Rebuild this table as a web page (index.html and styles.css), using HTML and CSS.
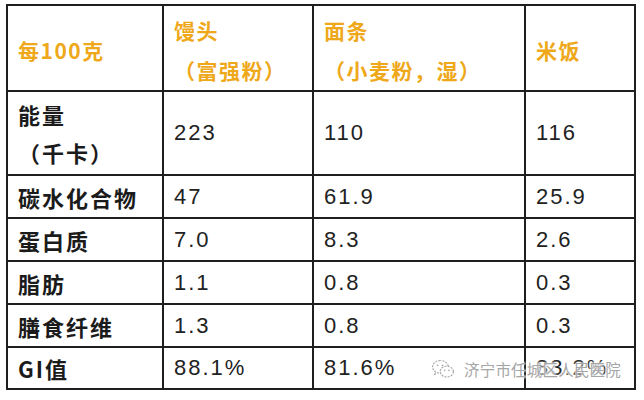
FILE: index.html
```html
<!DOCTYPE html>
<html lang="zh-CN">
<head>
<meta charset="utf-8">
<title>馒头 面条 米饭 营养对比</title>
<link rel="stylesheet" href="styles.css">
</head>
<body>
<div class="page">
  <table class="nutri">
    <colgroup>
      <col class="c1"><col class="c2"><col class="c3"><col class="c4">
    </colgroup>
    <tr class="r-head">
      <th class="hd">每100克</th>
      <th class="hd">馒头<br>（富强粉）</th>
      <th class="hd">面条<br>（小麦粉，湿）</th>
      <th class="hd">米饭</th>
    </tr>
    <tr class="r-tall">
      <td class="lb">能量<br>（千卡）</td>
      <td class="num">223</td>
      <td class="num">110</td>
      <td class="num">116</td>
    </tr>
    <tr class="r-row">
      <td class="lb">碳水化合物</td>
      <td class="num">47</td>
      <td class="num">61.9</td>
      <td class="num">25.9</td>
    </tr>
    <tr class="r-row">
      <td class="lb">蛋白质</td>
      <td class="num">7.0</td>
      <td class="num">8.3</td>
      <td class="num">2.6</td>
    </tr>
    <tr class="r-row">
      <td class="lb">脂肪</td>
      <td class="num">1.1</td>
      <td class="num">0.8</td>
      <td class="num">0.3</td>
    </tr>
    <tr class="r-row">
      <td class="lb">膳食纤维</td>
      <td class="num">1.3</td>
      <td class="num">0.8</td>
      <td class="num">0.3</td>
    </tr>
    <tr class="r-last">
      <td class="lb">GI值</td>
      <td class="num">88.1%</td>
      <td class="num">81.6%</td>
      <td class="num">83.2%</td>
    </tr>
  </table>
  <div class="watermark">
    <svg class="wm-icon" width="24" height="22" viewBox="0 0 24 22">
      <path d="M9.5 2.5c-4.4 0-8 2.9-8 6.4 0 2 1.1 3.7 2.9 4.9l-.8 2.5 2.9-1.5c1 .3 2 .5 3 .5" fill="none" stroke="#a8a8a8" stroke-width="1.2" stroke-dasharray="2 1.2"/>
      <path d="M17.3 8.2c-.7-3.3-4-5.7-7.8-5.7" fill="none" stroke="#a8a8a8" stroke-width="1.2" stroke-dasharray="2 1.2"/>
      <ellipse cx="15.8" cy="13.6" rx="6.6" ry="5.4" fill="none" stroke="#a8a8a8" stroke-width="1.2" stroke-dasharray="2 1.2"/>
      <circle cx="6.6" cy="7.3" r="0.9" fill="#a8a8a8"/>
      <circle cx="11.6" cy="7.3" r="0.9" fill="#a8a8a8"/>
      <circle cx="13.6" cy="12.4" r="0.8" fill="#a8a8a8"/>
      <circle cx="18" cy="12.4" r="0.8" fill="#a8a8a8"/>
    </svg>
    <span class="wm-text">济宁市任城区人民医院</span>
  </div>
</div>
</body>
</html>
```
FILE: styles.css
```css
* { box-sizing: border-box; }
html, body { margin: 0; padding: 0; background: #fff; }
body {
  width: 644px;
  height: 400px;
  overflow: hidden;
  font-family: "Liberation Sans", "Noto Sans CJK SC", sans-serif;
}
.page {
  position: relative;
  width: 644px;
  height: 400px;
  padding: 4px 0 0 6px;
}
.nutri {
  table-layout: fixed;
  width: 630px;
  border-collapse: separate;
  border-spacing: 2px;
  background: #1f1f1f;
}
.c1 { width: 154px; }
.c2 { width: 148px; }
.c3 { width: 210px; }
.c4 { width: 108px; }
.nutri th, .nutri td {
  background: #fff;
  padding: 0 0 0 10px;
  text-align: left;
  vertical-align: middle;
  white-space: nowrap;
}
.r-head th { height: 84px; padding-top: 3px; }
.r-tall td { height: 82px; }
.r-row td { height: 41px; }
.r-last td { height: 40px; }
.hd {
  font-family: "Noto Sans CJK SC", sans-serif;
  font-size: 21px;
  font-weight: 700;
  letter-spacing: 1.5px;
  line-height: 40px;
  color: #eea81a;
}
.lb {
  font-family: "Noto Sans CJK SC", sans-serif;
  font-size: 22px;
  font-weight: 700;
  letter-spacing: 2px;
  line-height: 38px;
  color: #1b1b1b;
}
.num {
  font-family: "Liberation Sans", "Noto Sans CJK SC", sans-serif;
  font-size: 22px;
  letter-spacing: 2px;
  color: #222;
}
.watermark {
  position: absolute;
  left: 431px;
  top: 358px;
  display: flex;
  align-items: center;
  gap: 9px;
}
.wm-icon { display: block; }
.wm-text {
  font-family: "Noto Sans CJK SC", sans-serif;
  font-size: 15.5px;
  letter-spacing: 0.2px;
  color: #a6a6a6;
  text-shadow: 0 0 2px #fff, 0 0 2px #fff, 0 0 3px #fff;
  line-height: 22px;
}
```
